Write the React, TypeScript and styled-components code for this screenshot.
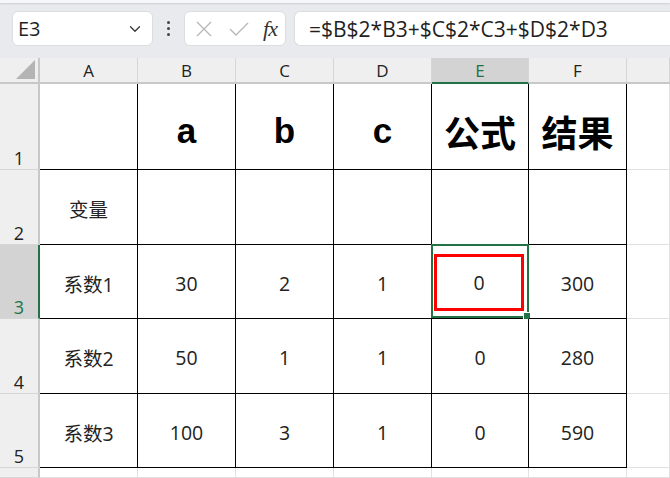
import { Fragment } from "react"
import styled, { createGlobalStyle, css } from "styled-components"
import { ChevronDown } from "lucide-react"

const GlobalStyle = createGlobalStyle`
  html, body {
    margin: 0;
    padding: 0;
    background: #ffffff;
    font-family: "Open Sans", "Noto Sans CJK SC", sans-serif;
    overflow: hidden;
  }
`

const GREEN = "#217346"

const Page = styled.div`
  width: 670px;
  height: 478px;
  display: flex;
  flex-direction: column;
  overflow: hidden;
`

const TopStrip = styled.div`
  height: 3px;
  background: #f6f7f8;
  box-shadow: 0 1px 2px rgba(0, 0, 0, 0.12);
  position: relative;
  z-index: 1;
`

const Toolbar = styled.div`
  height: 55px;
  box-sizing: border-box;
  background: #e8eaed;
  display: flex;
  align-items: center;
  padding: 0 0 4px 12px;
  gap: 8px;
`

const Box = styled.div`
  height: 35px;
  box-sizing: border-box;
  background: #ffffff;
  border: 1px solid #dcdde0;
  border-radius: 6px;
  display: flex;
  align-items: center;
`

const NameBox = styled(Box)`
  width: 141px;
  padding: 0 8px 0 5px;
  justify-content: space-between;
  font-size: 20px;
  color: #1f1f1f;
`

const Dots = styled.div`
  width: 14px;
  display: flex;
  flex-direction: column;
  align-items: center;
  gap: 3px;

  span {
    width: 3px;
    height: 3px;
    border-radius: 50%;
    background: #444;
  }
`

const FxBox = styled(Box)`
  width: 102px;
  padding: 0 6px 0 8px;
  justify-content: space-between;
  margin-left: 1px;
`

const Fx = styled.span`
  font-family: "Liberation Serif", serif;
  font-style: italic;
  font-size: 22px;
  color: #333;
  letter-spacing: -1px;
  padding-right: 2px;
`

const FormulaBox = styled(Box)`
  flex: 1;
  border-right: none;
  border-radius: 6px 0 0 6px;
  padding-left: 14px;
  font-size: 21px;
  color: #1f1f1f;
  white-space: nowrap;
`

const Sheet = styled.div`
  flex: 1;
  display: grid;
  grid-template-columns: 40px 98px 98px 98px 98px 97px 98px 1fr;
  grid-template-rows: 26px 86px 75px 74px 75px 74px 1fr;
  background: #ffffff;
`

const Corner = styled.div`
  background: #efefef;
  border-right: 2px solid #c8c8c8;
  border-bottom: 2px solid #c8c8c8;
  box-sizing: border-box;
  display: flex;
  align-items: flex-end;
  justify-content: flex-end;
  padding: 0 3px 3px 0;
`

const ColHead = styled.div<{ $active?: boolean }>`
  box-sizing: border-box;
  background: ${(p) => (p.$active ? "#d3d3d3" : "#efefef")};
  border-right: 1px solid #d6d6d6;
  border-bottom: 2px solid ${(p) => (p.$active ? GREEN : "#c8c8c8")};
  display: flex;
  align-items: center;
  justify-content: center;
  font-size: 17px;
  color: ${(p) => (p.$active ? GREEN : "#222")};
  padding-top: 1px;
`

const RowHead = styled.div<{ $active?: boolean }>`
  box-sizing: border-box;
  background: ${(p) => (p.$active ? "#d3d3d3" : "#efefef")};
  border-right: 2px solid ${(p) => (p.$active ? GREEN : "#c8c8c8")};
  border-bottom: 1px solid #d6d6d6;
  display: flex;
  align-items: flex-end;
  justify-content: center;
  font-size: 18px;
  line-height: 1;
  padding-bottom: 2px;
  color: ${(p) => (p.$active ? GREEN : "#222")};
`

const Cell = styled.div<{ $ruled?: boolean; $title?: boolean; $cjk?: boolean }>`
  box-sizing: border-box;
  border-right: 1px solid ${(p) => (p.$ruled ? "#000" : "#e1e1e1")};
  border-bottom: 1px solid ${(p) => (p.$ruled ? "#000" : "#e1e1e1")};
  display: flex;
  align-items: center;
  justify-content: center;
  font-size: 19.5px;
  color: #222;
  position: relative;
  padding-top: 3px;
  ${(p) =>
    p.$title &&
    css`
      font-family: "Liberation Sans", "Noto Sans CJK SC", sans-serif;
      font-weight: bold;
      color: #000;
      padding-top: 8px;
      font-size: ${p.$cjk ? "36px" : "35px"};
    `}
`

const Selection = styled.div`
  position: absolute;
  inset: -1px -1px 0 -1px;
  border: 2px solid ${GREEN};
  pointer-events: none;

  &::after {
    content: "";
    position: absolute;
    right: -4px;
    bottom: -4px;
    width: 6px;
    height: 6px;
    background: ${GREEN};
    border: 1px solid #fff;
  }
`

const Highlight = styled.div`
  flex: 1;
  align-self: stretch;
  margin: 6px 4px 7px 2px;
  border: 3px solid #ff0000;
  display: flex;
  align-items: center;
  justify-content: center;
`

const cols = ["A", "B", "C", "D", "E", "F", ""]

const rows: string[][] = [
  ["", "a", "b", "c", "公式", "结果"],
  ["变量", "", "", "", "", ""],
  ["系数1", "30", "2", "1", "0", "300"],
  ["系数2", "50", "1", "1", "0", "280"],
  ["系数3", "100", "3", "1", "0", "590"],
]

function App() {
  return (
    <Page>
      <GlobalStyle />
      <TopStrip />
      <Toolbar>
        <NameBox>
          <span>E3</span>
          <ChevronDown size={18} color="#333" strokeWidth={1.6} />
        </NameBox>
        <Dots>
          <span />
          <span />
          <span />
        </Dots>
        <FxBox>
          <svg width="22" height="22" viewBox="0 0 22 22" fill="none" stroke="#b8b8b8" strokeWidth="1.4">
            <path d="M4 4 L18 18 M18 4 L4 18" />
          </svg>
          <svg width="24" height="22" viewBox="0 0 24 22" fill="none" stroke="#b8b8b8" strokeWidth="1.4">
            <path d="M3 11 L9 17 L21 5" />
          </svg>
          <Fx>fx</Fx>
        </FxBox>
        <FormulaBox>=$B$2*B3+$C$2*C3+$D$2*D3</FormulaBox>
      </Toolbar>
      <Sheet>
        <Corner>
          <svg width="19" height="19" viewBox="0 0 19 19">
            <path d="M19 0 L19 19 L0 19 Z" fill="#b4b4b4" />
          </svg>
        </Corner>
        {cols.map((c, i) => (
          <ColHead key={i} $active={c === "E"}>
            {c}
          </ColHead>
        ))}
        {rows.map((row, r) => (
          <Fragment key={r}>
            <RowHead $active={r === 2}>{r + 1}</RowHead>
            {row.map((v, c) => {
              if (r === 2 && c === 4) {
                return (
                  <Cell key={c} $ruled>
                    <Highlight>{v}</Highlight>
                    <Selection />
                  </Cell>
                )
              }
              return (
                <Cell key={c} $ruled $title={r === 0} $cjk={c >= 4}>
                  {v}
                </Cell>
              )
            })}
            <Cell />
          </Fragment>
        ))}
        <RowHead />
        {cols.map((_, i) => (
          <Cell key={i} />
        ))}
      </Sheet>
    </Page>
  )
}

export default App
